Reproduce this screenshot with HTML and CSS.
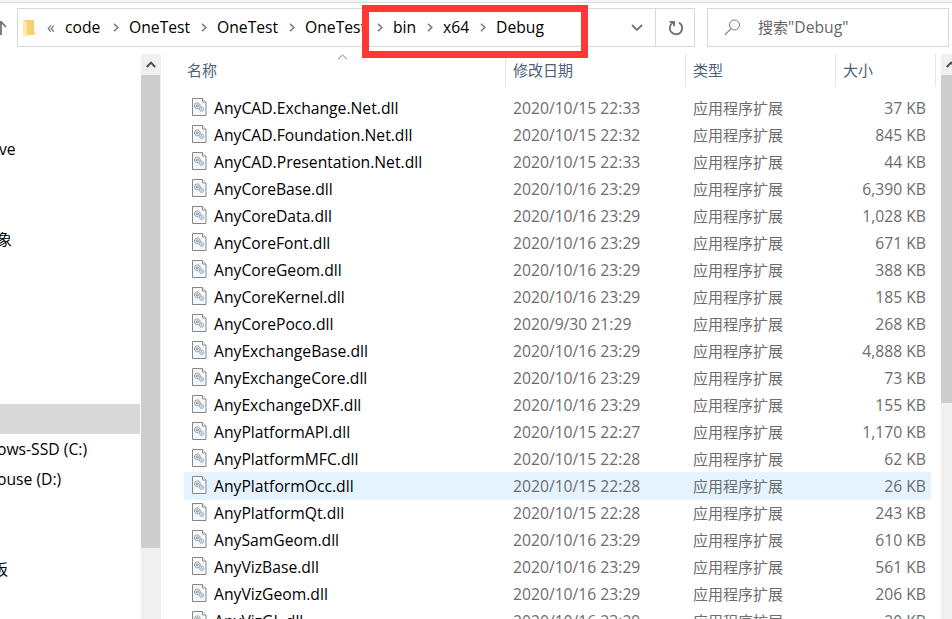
FILE: index.html
```html
<!DOCTYPE html>
<html lang="zh-CN">
<head>
    <meta charset="UTF-8">
    <title>Debug</title>
    <link rel="stylesheet" href="styles.css">
</head>
<body>
    <svg width="0" height="0" class="defs">
        <symbol id="dll" viewBox="0 0 15 18">
            <path d="M.5.5h10l3.5 3.5v13.5H.5z" fill="#f7f8f9" stroke="#85888b"/>
            <path d="M10.5.5v3.5h3.5" fill="#fff" stroke="#85888b"/>
            <circle cx="5.3" cy="7.8" r="2.9" fill="#e4e6e8" stroke="#72777b" stroke-dasharray="1.2 .6"/>
            <circle cx="5.3" cy="7.8" r="1" fill="#fff" stroke="#72777b" stroke-width=".8"/>
            <circle cx="9.6" cy="11.3" r="2.2" fill="#d6eafa" stroke="#69a3d2" stroke-dasharray="1.2 .5"/>
            <circle cx="9.6" cy="11.3" r=".7" fill="#fff" stroke="#69a3d2" stroke-width=".6"/>
        </symbol>
        <symbol id="sep" viewBox="0 0 6 9">
            <path d="M1 .7l3.8 3.8L1 8.3" fill="none" stroke="#7b7b7b" stroke-width="1.6"/>
        </symbol>
        <symbol id="up" viewBox="0 0 10 7">
            <path d="M.8 6L5 1.6 9.2 6" fill="none" stroke="#505050" stroke-width="2"/>
        </symbol>
    </svg>

    <div class="topbar">
        <svg class="up-arrow" width="7" height="16" viewBox="0 0 7 16"><path d="M1 15V2M-4 7l5-5.3L6 7" fill="none" stroke="#737373" stroke-width="1.8"/></svg>
        <div class="address">
            <svg class="folder" width="13" height="18" viewBox="0 0 13 18">
                <path d="M1 1h10v11l1 1v3H1z" fill="#f7d272"/>
                <path d="M0 1l4 2v15l-4-2z" fill="#ffe9a6"/>
            </svg>
            <span class="more">«</span>
            <span class="crumb code">code</span>
            <svg class="sep"><use href="#sep"/></svg>
            <span class="crumb one">OneTest</span>
            <svg class="sep"><use href="#sep"/></svg>
            <span class="crumb one">OneTest</span>
            <svg class="sep"><use href="#sep"/></svg>
            <span class="crumb one last">OneTest</span>
            <svg class="sep"><use href="#sep"/></svg>
            <span class="crumb bin">bin</span>
            <svg class="sep"><use href="#sep"/></svg>
            <span class="crumb x64">x64</span>
            <svg class="sep"><use href="#sep"/></svg>
            <span class="crumb">Debug</span>
            <svg class="dropdown" width="12" height="8" viewBox="0 0 12 8"><path d="M1 1l5 5 5-5" fill="none" stroke="#737373" stroke-width="1.8"/></svg>
            <div class="refresh">
                <svg width="16" height="16" viewBox="0 0 16 16"><path d="M11 2.7A6.2 6.2 0 1 1 4.8 2.8M1.5 1.9h4.6v4.4" fill="none" stroke="#737373" stroke-width="1.9"/></svg>
            </div>
        </div>
        <div class="search">
            <svg width="17" height="17" viewBox="0 0 17 17"><circle cx="10.5" cy="6" r="5" fill="none" stroke="#777"/><path d="M7 9.7L.8 15.8" stroke="#777" stroke-width="1.1"/></svg>
            <span><span class="zh">搜索</span>"Debug"</span>
        </div>
    </div>

    <div class="main">
        <div class="nav">
            <div></div>
            <div></div>
            <div><span class="cut ve">ve</span></div>
            <div></div>
            <div></div>
            <div class="zh"><span class="cut">象</span></div>
            <div></div>
            <div></div>
            <div></div>
            <div></div>
            <div></div>
            <div class="current"></div>
            <div><span class="cut">ows-SSD (C:)</span></div>
            <div><span class="cut">ouse (D:)</span></div>
            <div></div>
            <div></div>
            <div class="zh"><span class="cut ban">板</span></div>
        </div>
        <div class="scroll">
            <svg width="10" height="7"><use href="#up"/></svg>
            <div class="thumb"></div>
        </div>
        <div class="files">
            <div class="head">
                <div>名称<svg class="sort" width="11" height="6" viewBox="0 0 11 6"><path d="M1 5.3L5.5 1 10 5.3" fill="none" stroke="#777"/></svg></div>
                <div>修改日期</div>
                <div>类型</div>
                <div>大小</div>
            </div>
            <div class="row"><svg><use href="#dll"/></svg><b>AnyCAD.Exchange.Net.dll</b><span>2020/10/15 22:33</span><span class="zh">应用程序扩展</span><i>37 KB</i></div>
            <div class="row"><svg><use href="#dll"/></svg><b>AnyCAD.Foundation.Net.dll</b><span>2020/10/15 22:32</span><span class="zh">应用程序扩展</span><i>845 KB</i></div>
            <div class="row"><svg><use href="#dll"/></svg><b>AnyCAD.Presentation.Net.dll</b><span>2020/10/15 22:33</span><span class="zh">应用程序扩展</span><i>44 KB</i></div>
            <div class="row"><svg><use href="#dll"/></svg><b>AnyCoreBase.dll</b><span>2020/10/16 23:29</span><span class="zh">应用程序扩展</span><i>6,390 KB</i></div>
            <div class="row"><svg><use href="#dll"/></svg><b>AnyCoreData.dll</b><span>2020/10/16 23:29</span><span class="zh">应用程序扩展</span><i>1,028 KB</i></div>
            <div class="row"><svg><use href="#dll"/></svg><b>AnyCoreFont.dll</b><span>2020/10/16 23:29</span><span class="zh">应用程序扩展</span><i>671 KB</i></div>
            <div class="row"><svg><use href="#dll"/></svg><b>AnyCoreGeom.dll</b><span>2020/10/16 23:29</span><span class="zh">应用程序扩展</span><i>388 KB</i></div>
            <div class="row"><svg><use href="#dll"/></svg><b>AnyCoreKernel.dll</b><span>2020/10/16 23:29</span><span class="zh">应用程序扩展</span><i>185 KB</i></div>
            <div class="row"><svg><use href="#dll"/></svg><b>AnyCorePoco.dll</b><span>2020/9/30 21:29</span><span class="zh">应用程序扩展</span><i>268 KB</i></div>
            <div class="row"><svg><use href="#dll"/></svg><b>AnyExchangeBase.dll</b><span>2020/10/16 23:29</span><span class="zh">应用程序扩展</span><i>4,888 KB</i></div>
            <div class="row"><svg><use href="#dll"/></svg><b>AnyExchangeCore.dll</b><span>2020/10/16 23:29</span><span class="zh">应用程序扩展</span><i>73 KB</i></div>
            <div class="row"><svg><use href="#dll"/></svg><b>AnyExchangeDXF.dll</b><span>2020/10/16 23:29</span><span class="zh">应用程序扩展</span><i>155 KB</i></div>
            <div class="row"><svg><use href="#dll"/></svg><b>AnyPlatformAPI.dll</b><span>2020/10/15 22:27</span><span class="zh">应用程序扩展</span><i>1,170 KB</i></div>
            <div class="row"><svg><use href="#dll"/></svg><b>AnyPlatformMFC.dll</b><span>2020/10/15 22:28</span><span class="zh">应用程序扩展</span><i>62 KB</i></div>
            <div class="row hover"><svg><use href="#dll"/></svg><b>AnyPlatformOcc.dll</b><span>2020/10/15 22:28</span><span class="zh">应用程序扩展</span><i>26 KB</i></div>
            <div class="row"><svg><use href="#dll"/></svg><b>AnyPlatformQt.dll</b><span>2020/10/15 22:28</span><span class="zh">应用程序扩展</span><i>243 KB</i></div>
            <div class="row"><svg><use href="#dll"/></svg><b>AnySamGeom.dll</b><span>2020/10/16 23:29</span><span class="zh">应用程序扩展</span><i>610 KB</i></div>
            <div class="row"><svg><use href="#dll"/></svg><b>AnyVizBase.dll</b><span>2020/10/16 23:29</span><span class="zh">应用程序扩展</span><i>561 KB</i></div>
            <div class="row"><svg><use href="#dll"/></svg><b>AnyVizGeom.dll</b><span>2020/10/16 23:29</span><span class="zh">应用程序扩展</span><i>206 KB</i></div>
            <div class="row"><svg><use href="#dll"/></svg><b>AnyVizGL.dll</b><span>2020/10/16 23:29</span><span class="zh">应用程序扩展</span><i>20 KB</i></div>
        </div>
        <div class="scroll right">
            <svg width="10" height="7"><use href="#up"/></svg>
            <div class="thumb"></div>
        </div>
    </div>
    <div class="mark"></div>
</body>
</html>
```
FILE: styles.css
```css
* {
    box-sizing: border-box;
}
body {
    margin: 0;
    width: 952px;
    height: 619px;
    overflow: hidden;
    background: #fff;
    color: #000;
    font: 15.7px/27px "Open Sans", "Noto Sans CJK SC", sans-serif;
    border-top: 2px solid #f5f6f7;
    display: flex;
    flex-direction: column;
}
.zh {
    font-size: 15px;
}
.defs {
    position: absolute;
}
svg {
    flex: none;
}
.topbar {
    flex: none;
    height: 52px;
    border-top: 1px solid #d9dbdd;
    padding-top: 5px;
    display: flex;
}
.up-arrow {
    margin: 12px 10px 0 0;
}
.address {
    width: 678px;
    height: 39px;
    border: 1px solid #d9d9d9;
    display: flex;
    align-items: center;
}
.folder {
    margin: 0 11px 0 5px;
}
.more {
    width: 18px;
    color: #666;
}
.crumb {
    white-space: nowrap;
}
.sep {
    width: 6px;
    height: 9px;
    margin-right: 10px;
}
.code {
    width: 48px;
}
.one {
    width: 72px;
}
.bin {
    width: 34px;
}
.x64 {
    width: 37px;
}
.dropdown {
    margin-left: auto;
    margin-right: 12px;
}
.refresh {
    width: 39px;
    height: 37px;
    border-left: 1px solid #d9d9d9;
    padding-left: 2px;
    display: flex;
    align-items: center;
    justify-content: center;
}
.search {
    width: 242px;
    height: 39px;
    margin-left: 12px;
    padding-left: 16px;
    border: 1px solid #d9d9d9;
    color: #666;
    display: flex;
    align-items: center;
    gap: 17px;
}
.main {
    flex: 1;
    min-height: 0;
    display: flex;
}
.nav {
    width: 140px;
    margin-right: 1px;
    padding-top: 20px;
    overflow: hidden;
}
.nav div {
    height: 30px;
    line-height: 30px;
    white-space: nowrap;
}
.nav .current {
    background: #d9d9d9;
}
.cut {
    margin-left: -3px;
}
.ve {
    margin-left: -1px;
}
.ban {
    margin-left: -7px;
}
.scroll {
    width: 20px;
    background: #f0f0f0;
    display: flex;
    flex-direction: column;
    align-items: center;
    padding-top: 7px;
}
.thumb {
    width: 19px;
    height: 473px;
    margin-top: 7px;
    align-self: flex-start;
    background: #cdcdcd;
}
.files {
    width: 778px;
    margin-left: 2px;
    border-left: 1px solid #f5f5f5;
    padding-left: 20px;
}
.head {
    height: 32px;
    margin-bottom: 8px;
    color: #4c607a;
    font-size: 15px;
    line-height: 33px;
    display: grid;
    grid-template-columns: 322px 180px 150px 100px;
}
.head div {
    position: relative;
    padding-left: 7px;
    border-right: 1px solid #e5e5e5;
}
.head div:first-child {
    padding-left: 3px;
}
.sort {
    position: absolute;
    left: 153px;
    top: 0;
}
.row {
    width: 747px;
    height: 27px;
    color: #6d6d6d;
    line-height: 28px;
    display: grid;
    grid-template-columns: 30px 299px 180px 150px 83px;
    white-space: nowrap;
}
.row svg {
    width: 15px;
    height: 18px;
    margin: 4px 0 0 8px;
}
.row b {
    font-weight: normal;
    color: #000;
}
.row i {
    font-style: normal;
    text-align: right;
}
.hover {
    height: 28px;
    margin-bottom: -1px;
    background: #e5f3ff;
}
.right {
    width: 11px;
    align-items: flex-start;
    overflow: hidden;
}
.right svg {
    margin-left: 5px;
}
.right .thumb {
    height: 328px;
}
.mark {
    position: absolute;
    left: 362px;
    top: 5px;
    width: 226px;
    height: 53px;
    border: 7px solid #ff3737;
}
```
